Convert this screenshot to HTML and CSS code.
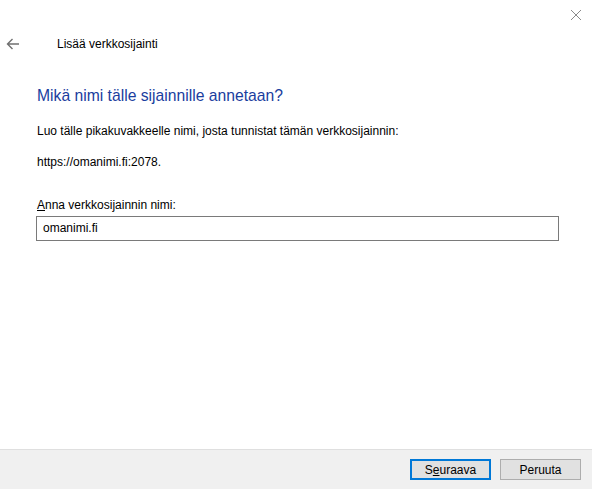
FILE: index.html
```html
<!DOCTYPE html>
<html lang="fi">
<head>
<meta charset="utf-8">
<title>Lisää verkkosijainti</title>
<link rel="stylesheet" href="styles.css">
</head>
<body>
<div class="window">
  <div class="titlebar">
    <svg class="close" width="12" height="12" viewBox="0 0 12 12"><path d="M1 1 L11 11 M11 1 L1 11" stroke="#8a8a8a" stroke-width="1" fill="none"/></svg>
  </div>
  <div class="header">
    <svg class="back" width="14" height="12" viewBox="0 0 14 12"><path d="M13 6 H1.5 M6.5 1 L1.5 6 L6.5 11" stroke="#707070" stroke-width="1.4" fill="none"/></svg>
    <span class="wintitle">Lisää verkkosijainti</span>
  </div>
  <div class="content">
    <h1 class="heading">Mikä nimi tälle sijainnille annetaan?</h1>
    <p class="text">Luo tälle pikakuvakkeelle nimi, josta tunnistat tämän verkkosijainnin:</p>
    <p class="text">https://omanimi.fi:2078.</p>
    <label class="label"><u>A</u>nna verkkosijainnin nimi:</label>
    <div class="input">omanimi.fi</div>
  </div>
  <div class="footer">
    <div class="btn btn-default">S<u>e</u>uraava</div>
    <div class="btn">Peruuta</div>
  </div>
</div>
</body>
</html>
```
FILE: styles.css
```css
html, body {
  margin: 0;
  padding: 0;
  background: #ffffff;
}
.window {
  width: 592px;
  height: 489px;
  display: flex;
  flex-direction: column;
  font-family: "Liberation Sans", Arial, sans-serif;
  font-size: 12px;
  color: #000;
}
.titlebar {
  height: 29px;
  display: flex;
  justify-content: flex-end;
  align-items: flex-start;
}
.close {
  margin: 9px 10px 0 0;
}
.header {
  height: 30px;
  display: flex;
  align-items: center;
  padding-left: 6px;
}
.back {
  margin-right: 37px;
}
.wintitle {
  font-size: 12px;
}
.content {
  padding-left: 37px;
  padding-right: 33px;
  display: flex;
  flex-direction: column;
}
.heading {
  margin: 26px 0 0 0;
  font-size: 15.7px;
  font-weight: normal;
  color: #1a3d9e;
  line-height: 22px;
}
.text {
  margin: 16px 0 0 0;
  line-height: 16px;
}
.text + .text {
  margin-top: 15px;
}
.label {
  margin-top: 27px;
  line-height: 16px;
}
.input {
  margin-top: 3px;
  margin-left: -1px;
  height: 23px;
  border: 1px solid #7a7a7a;
  line-height: 23px;
  padding-left: 6px;
}
.footer {
  margin-top: auto;
  height: 39px;
  background: #f0f0f0;
  border-top: 1px solid #dfdfdf;
  display: flex;
  justify-content: flex-end;
  align-items: flex-start;
  gap: 9px;
  padding-right: 11px;
}
.btn {
  margin-top: 9px;
  width: 79px;
  height: 19px;
  border: 1px solid #adadad;
  background: #e1e1e1;
  display: flex;
  align-items: center;
  justify-content: center;
}
.btn-default {
  border: 2px solid #0078d7;
  width: 77px;
  height: 17px;
}
```
